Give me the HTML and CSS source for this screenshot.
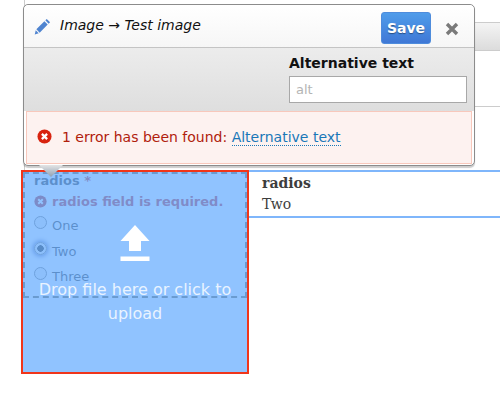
FILE: index.html
```html
<!DOCTYPE html>
<html lang="en">
<head>
<meta charset="utf-8">
<title>Image</title>
<link rel="stylesheet" href="styles.css">
</head>
<body>
<div class="page">
  <div class="behind">
    <div class="toolbar"></div>
    <div class="rule"></div>
  </div>
  <div class="row">
    <div class="field-col">
      <form class="field">
        <div class="field-label">radios <span class="star">*</span></div>
        <div class="field-error">
          <svg class="err-small" viewBox="0 0 16 16"><circle cx="8" cy="8" r="7.500" fill="#b02020"/><path d="M5.200 5.200l5.600 5.600M10.800 5.200l-5.600 5.600" stroke="#fff" stroke-width="2.400"/></svg>
          radios field is required.
        </div>
        <div class="option"><span class="radio"></span>One</div>
        <div class="option"><span class="radio checked"></span>Two</div>
        <div class="option"><span class="radio"></span>Three</div>
      </form>
      <div class="drop">
        <svg class="upload" viewBox="0 0 30 36"><path d="M15 0L29.500 16H21V26H9V16H.5z" fill="#fff"/><rect y="31.500" x="0.500" width="29" height="4.500" fill="#fff"/></svg>
        <div class="drop-text">Drop file here or click to upload</div>
      </div>
    </div>
    <div class="preview">
      <div class="preview-label">radios</div>
      <div class="preview-value">Two</div>
    </div>
  </div>
  <div class="dialog">
    <div class="dialog-head">
      <svg class="pencil" viewBox="0 0 18 18"><path d="M13.500 1L17 4.500 15.500 6 12 2.500z M11 3.500L14.500 7 6 15.500 2.500 12z M1.800 13L5 16.200 0.800 17.500z" fill="#4f84d0"/></svg>
      <div class="dialog-title">Image → Test image</div>
      <button class="save" type="button">Save</button>
      <svg class="close" viewBox="0 0 14 14"><path d="M2 2l10 10M12 2L2 12" stroke="#7a7a7a" stroke-width="3.400"/></svg>
    </div>
    <div class="dialog-body">
      <label class="alt-label">Alternative text</label>
      <div class="alt-input">alt</div>
    </div>
    <div class="dialog-error">
      <svg class="err-big" viewBox="0 0 16 16"><circle cx="8" cy="8" r="7.500" fill="#d8230f"/><path d="M5.200 5.200l5.600 5.600M10.800 5.200l-5.600 5.600" stroke="#fff" stroke-width="2.400"/></svg>
      <span>1 error has been found: <a class="err-link">Alternative text</a></span>
    </div>
    <div class="pointer"></div>
  </div>
</div>
</body>
</html>
```
FILE: styles.css
```css
* { box-sizing: border-box; }
html, body { margin: 0; padding: 0; background: #fff; }
.page {
  position: relative;
  width: 500px;
  height: 402px;
  overflow: hidden;
  font-family: "DejaVu Sans", sans-serif;
}
.behind { height: 170px; margin-left: 24px; padding-top: 22px; border-left: 1px solid #ccc; }
.toolbar {
  height: 29px;
  border-top: 1px solid #ccc;
  border-bottom: 1px solid #ccc;
  background: linear-gradient(#f4f4f4, #dcdcdc);
}
.rule { margin-top: 55px; height: 1px; background: #ccc; }
.row { display: flex; align-items: flex-start; }
.field-col { position: relative; width: 249px; padding: 2px 0 0 23px; flex: none; }
.field {
  width: 224px;
  height: 125px;
  padding: 0 0 0 11px;
  overflow: hidden;
  color: #333;
}
.field-label { font-size: 13px; font-weight: bold; line-height: 18px; color: #333; }
.star { color: #c02020; }
.field-error {
  display: flex;
  align-items: center;
  gap: 5px;
  margin-top: 2px;
  height: 18px;
  font-size: 13px;
  font-weight: bold;
  color: #c02020;
  white-space: nowrap;
}
.err-small { width: 13px; height: 13px; flex: none; }
.option { display: flex; align-items: center; height: 25.500px; padding-top: 6px; font-size: 13px; color: #333; }
.radio {
  width: 13px; height: 13px;
  margin: -6px 5px 0 0;
  border: 1px solid #777;
  border-radius: 50%;
  background: #eee;
  flex: none;
}
.radio.checked {
  background: radial-gradient(circle, #222 0 3px, #eee 3.500px);
  box-shadow: 0 0 5px 1px #3a4a9a;
}
.drop {
  position: absolute;
  left: 21px; top: 0;
  width: 228px; height: 204px;
  border: 2px solid #f0351a;
  background: rgba(107, 175, 255, .75);
  display: flex;
  flex-direction: column;
  align-items: center;
}
.drop::before {
  content: "";
  position: absolute;
  left: 0; top: 0;
  box-sizing: border-box;
  width: 224px; height: 126px;
  border: 2px dashed #6a9bd0;
}
.upload { width: 30px; height: 36px; margin-top: 53px; flex: none; }
.drop-text {
  width: 210px;
  margin-top: 17px;
  text-align: center;
  font-size: 16px;
  line-height: 24px;
  color: #e9f3ff;
}
.preview {
  flex: 1;
  height: 48px;
  padding: 1px 0 0 13px;
  border-top: 2px solid #7fb6fb;
  border-bottom: 2px solid #7fb6fb;
  font-family: "DejaVu Serif", serif;
  font-size: 14px;
  line-height: 21px;
  color: #3d3d3d;
}
.preview-label { font-weight: bold; }
.dialog {
  position: absolute;
  left: 23px; top: 4px;
  width: 452px; height: 162px;
  border: 1px solid #8c8c8c;
  border-radius: 5px;
  background: #fff;
  box-shadow: 0 2px 1px rgba(0, 0, 0, .2);
  display: flex;
  flex-direction: column;
}
.dialog-head {
  height: 43px;
  flex: none;
  display: flex;
  align-items: center;
  padding: 0 15px 0 10px;
  border-bottom: 1px solid #c4c4c4;
  border-radius: 5px 5px 0 0;
  background: linear-gradient(#fff, #f6f6f6);
}
.pencil { width: 17px; height: 17px; flex: none; }
.dialog-title { flex: 1; margin: 0 0 2px 9px; font-size: 14px; font-style: italic; color: #111; }
.save {
  width: 50px; height: 32px;
  margin-top: 4px;
  padding: 0;
  border: 1px solid #4e8cdc;
  border-radius: 3px;
  background: linear-gradient(#4f9cea, #3f78d6);
  color: #fff;
  font: bold 14px "DejaVu Sans", sans-serif;
  text-shadow: 0 1px 1px rgba(0, 0, 0, .4);
}
.close { width: 14px; height: 14px; margin: 6px 0 0 14px; flex: none; }
.dialog-body {
  height: 63px;
  flex: none;
  padding: 7px 7px 0 265px;
  background: linear-gradient(#ececec, #dedede);
}
.alt-label { display: block; font-size: 14px; font-weight: bold; line-height: 17px; color: #111; }
.alt-input {
  height: 27px;
  margin-top: 4px;
  padding-left: 6px;
  border: 1px solid #a8a8a8;
  background: #fff;
  font-size: 13px;
  line-height: 25px;
  color: #b4b4b4;
}
.dialog-error {
  height: 53px;
  margin: 0 2px;
  padding: 0 0 2px 10px;
  flex: none;
  display: flex;
  align-items: center;
  gap: 10px;
  border: 1px solid #f8c8bc;
  background: #fdf2f0;
  font-size: 14px;
  color: #b0200c;
}
.err-big { width: 15px; height: 15px; flex: none; }
.err-link { color: #1a78b8; border-bottom: 1px dotted #1a78b8; }
.pointer {
  position: absolute;
  left: 15px; top: 160px;
  width: 24px; height: 12px;
  background: linear-gradient(#e4e4e4, #8fa0b4);
  clip-path: polygon(0 0, 100% 0, 50% 100%);
}
```
